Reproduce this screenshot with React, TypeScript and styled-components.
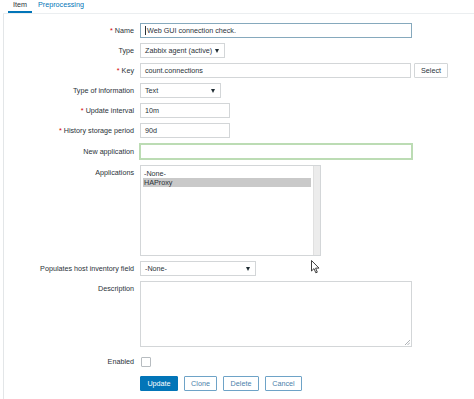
import React from 'react';
import styled, { createGlobalStyle } from 'styled-components';

const GlobalStyle = createGlobalStyle`
  html, body {
    margin: 0;
    padding: 0;
    background: #ffffff;
  }
  body {
    font-family: "Liberation Sans", Arial, sans-serif;
    font-size: 7.2px;
    color: #2a3238;
  }
`;

const Page = styled.div`
  position: relative;
  width: 474px;
  height: 399px;
  overflow: hidden;
`;

const TabBar = styled.div`
  display: flex;
  align-items: flex-end;
  height: 13px;
  padding-left: 5px;
  margin-left: 3px;
  border-bottom: 1px solid #ebeef0;
`;

const Tab = styled.div<{ $active?: boolean }>`
  height: 13px;
  padding: 0 5px;
  margin-right: 1px;
  box-sizing: border-box;
  line-height: 9px;
  color: ${p => (p.$active ? '#2a3238' : '#0275b8')};
  border-bottom: 2px solid ${p => (p.$active ? '#0275b8' : 'transparent')};
`;

const Panel = styled.div`
  margin-left: 3px;
  border-left: 1px solid #e3e6e8;
  padding-top: 9px;
  height: 386px;
  box-sizing: border-box;
`;

const Form = styled.div`
  display: flex;
  flex-direction: column;
  gap: 5px;
`;

const Row = styled.div<{ $h?: number; $top?: boolean }>`
  display: grid;
  grid-template-columns: 130px 1fr;
  column-gap: 6px;
  align-items: ${p => (p.$top ? 'start' : 'center')};
  min-height: ${p => p.$h ?? 15}px;
`;

const Label = styled.div<{ $top?: boolean }>`
  text-align: right;
  white-space: nowrap;
  padding-top: ${p => (p.$top ? '3px' : '0')};
`;

const Req = styled.span`
  color: #d40000;
  margin-right: 2px;
`;

const Controls = styled.div`
  display: flex;
  align-items: center;
  gap: 3px;
`;

const TextBox = styled.div<{ $w: number; $focus?: boolean }>`
  width: ${p => p.$w}px;
  height: 15px;
  box-sizing: border-box;
  border: 1px solid ${p => (p.$focus ? '#86a9bd' : '#d3d6d8')};
  padding: 0 4px;
  display: flex;
  align-items: center;
  white-space: nowrap;
  background: #fff;
`;

const Caret = styled.span`
  display: inline-block;
  width: 1px;
  height: 9px;
  background: #2a3238;
  margin-right: 1px;
`;

const NewAppBox = styled.div`
  width: 274px;
  height: 17px;
  margin-left: -1px;
  box-sizing: border-box;
  border: 2px solid #bcdcb4;
  background: #fff;
`;

const SelectBox = styled.div<{ $w: number }>`
  width: ${p => p.$w}px;
  height: 15px;
  box-sizing: border-box;
  border: 1px solid #d3d6d8;
  padding: 0 5px 0 4px;
  display: flex;
  align-items: center;
  justify-content: space-between;
  white-space: nowrap;
  background: #fff;
`;

const Arrow = styled.span`
  width: 0;
  height: 0;
  border-left: 2.5px solid transparent;
  border-right: 2.5px solid transparent;
  border-top: 4px solid #1f2c33;
`;

const ListBox = styled.div`
  width: 181px;
  height: 91px;
  box-sizing: border-box;
  border: 1px solid #d3d6d8;
  display: flex;
  background: #fff;
`;

const ListItems = styled.div`
  flex: 1;
  padding: 3px 2px;
`;

const ListItem = styled.div<{ $sel?: boolean }>`
  height: 9px;
  line-height: 9px;
  padding-left: 1px;
  background: ${p => (p.$sel ? '#c9c9c9' : 'transparent')};
`;

const ScrollTrack = styled.div`
  width: 6px;
  background: #ececec;
  border-left: 1px solid #e0e0e0;
`;

const TextArea = styled.div`
  position: relative;
  width: 272px;
  height: 66px;
  box-sizing: border-box;
  border: 1px solid #d3d6d8;
  background: #fff;
`;

const Grip = styled.svg`
  position: absolute;
  right: 1px;
  bottom: 1px;
`;

const Check = styled.div`
  width: 10px;
  height: 10px;
  margin-left: 1px;
  box-sizing: border-box;
  border: 1px solid #b7bcc0;
  border-radius: 1px;
  background: #fff;
`;

const Button = styled.div<{ $primary?: boolean; $w: number }>`
  width: ${p => p.$w}px;
  height: 15px;
  box-sizing: border-box;
  display: flex;
  align-items: center;
  justify-content: center;
  border: 1px solid ${p => (p.$primary ? '#0275b8' : '#6ea3c7')};
  background: ${p => (p.$primary ? '#0275b8' : '#fff')};
  color: ${p => (p.$primary ? '#ffffff' : '#4a80aa')};
  border-radius: 1px;
`;

const GrayButton = styled(Button)`
  border-color: #d3d6d8;
  color: #2a3238;
`;

const ButtonRow = styled.div`
  display: flex;
  gap: 6px;
`;

const Cursor = styled.svg`
  position: absolute;
  left: 311px;
  top: 260px;
`;

export default function App() {
  return (
    <Page>
      <GlobalStyle />
      <TabBar>
        <Tab $active>Item</Tab>
        <Tab>Preprocessing</Tab>
      </TabBar>
      <Panel>
        <Form>
          <Row>
            <Label><Req>*</Req>Name</Label>
            <TextBox $w={272} $focus><Caret />Web GUI connection check.</TextBox>
          </Row>
          <Row>
            <Label>Type</Label>
            <SelectBox $w={85}>Zabbix agent (active)<Arrow /></SelectBox>
          </Row>
          <Row>
            <Label><Req>*</Req>Key</Label>
            <Controls>
              <TextBox $w={271}>count.connections</TextBox>
              <GrayButton $w={34}>Select</GrayButton>
            </Controls>
          </Row>
          <Row>
            <Label>Type of information</Label>
            <SelectBox $w={81}>Text<Arrow /></SelectBox>
          </Row>
          <Row>
            <Label><Req>*</Req>Update interval</Label>
            <TextBox $w={90}>10m</TextBox>
          </Row>
          <Row>
            <Label><Req>*</Req>History storage period</Label>
            <TextBox $w={90}>90d</TextBox>
          </Row>
          <Row $h={17}>
            <Label>New application</Label>
            <NewAppBox />
          </Row>
          <Row $top>
            <Label $top>Applications</Label>
            <ListBox>
              <ListItems>
                <ListItem>-None-</ListItem>
                <ListItem $sel>HAProxy</ListItem>
              </ListItems>
              <ScrollTrack />
            </ListBox>
          </Row>
          <Row>
            <Label>Populates host inventory field</Label>
            <SelectBox $w={116}>-None-<Arrow /></SelectBox>
          </Row>
          <Row $top>
            <Label $top>Description</Label>
            <TextArea>
              <Grip width="6" height="6" viewBox="0 0 6 6">
                <path d="M1 6 L6 1 M3.5 6 L6 3.5" stroke="#9aa0a4" strokeWidth="0.8" />
              </Grip>
            </TextArea>
          </Row>
          <Row $h={19}>
            <Label>Enabled</Label>
            <Check />
          </Row>
          <Row>
            <div />
            <ButtonRow>
              <Button $primary $w={38}>Update</Button>
              <Button $w={33}>Clone</Button>
              <Button $w={36}>Delete</Button>
              <Button $w={37}>Cancel</Button>
            </ButtonRow>
          </Row>
        </Form>
      </Panel>
      <Cursor width="9" height="14" viewBox="0 0 9 14">
        <path d="M0.5 0.5 L0.5 11 L3 8.6 L4.8 12.8 L6.3 12.2 L4.6 8.1 L8 8.1 Z" fill="#ffffff" stroke="#2a2a2a" strokeWidth="0.9" strokeLinejoin="round" />
      </Cursor>
    </Page>
  );
}
